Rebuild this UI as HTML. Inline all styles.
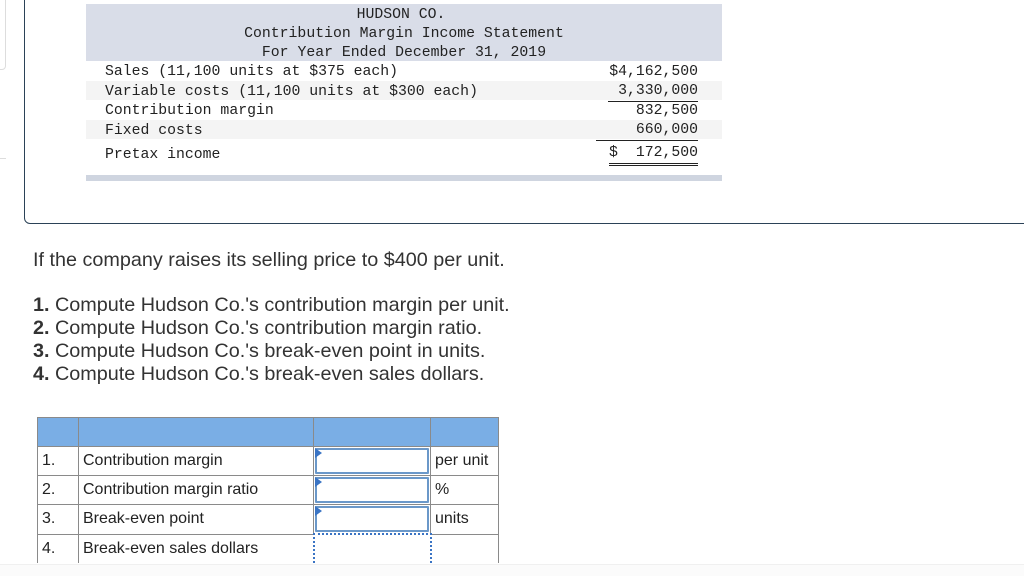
<!DOCTYPE html>
<html><head><style>
body{margin:0;width:1024px;height:575px;overflow:hidden;background:#fff;position:relative;font-family:"Liberation Sans",Arial,sans-serif;}
.abs{position:absolute}
.mono{font-family:"Liberation Mono",monospace;font-size:14.8px;color:#222;}
.card{left:24px;top:-10px;width:1100px;height:232px;border:1px solid #2b4257;border-radius:6px;}
.st{left:86px;width:636px;}
.row{position:absolute;left:86px;width:636px;height:19.5px;line-height:22px;}
.row .l{position:absolute;left:19px}
.row .r{position:absolute;right:24px;text-align:right}
.q{font-size:19.8px;color:#333;left:33px;line-height:23.3px}
table{border-collapse:collapse;position:absolute;left:37px;top:417px;font-size:16px;color:#222}
td{border:1px solid #8a8a8a;height:28px;padding:0 4px;vertical-align:middle}
tr.h td{background:#7aaee5;height:28px}
.inp{position:relative;padding:0}
.inp div{position:absolute;left:1px;top:1px;right:1px;bottom:1px;border:2px solid #6b98c9;border-radius:1px}
.inp span{position:absolute;left:1px;top:1px;width:0;height:0;border-top:5px solid transparent;border-bottom:5px solid transparent;border-left:7px solid #3a74c4}
</style></head><body>
<div class="abs" style="left:-6px;top:-6px;width:10px;height:74px;border:1px solid #ddd;border-radius:4px"></div>
<div class="abs" style="left:0;top:158px;width:6px;height:1px;background:#ddd"></div>
<div class="abs card"></div>
<div class="abs st mono" style="top:4px;height:57px;background:#d9dde8;text-align:center;line-height:19px;padding-top:0">
<div style="width:636px;padding-top:2px"><span style="position:relative;left:-3px">HUDSON CO.</span><br>Contribution Margin Income Statement<br>For Year Ended December 31, 2019</div></div>
<div class="row mono" style="top:61px"><span class="l">Sales (11,100 units at $375 each)</span><span class="r">$4,162,500</span></div>
<div class="row mono" style="top:80.5px;background:#f4f4f4"><span class="l">Variable costs (11,100 units at $300 each)</span><span class="r" style="border-bottom:1px solid #222;line-height:20px;padding-left:10px">3,330,000</span></div>
<div class="row mono" style="top:100px"><span class="l">Contribution margin</span><span class="r">832,500</span></div>
<div class="row mono" style="top:119.5px;background:#f4f4f4"><span class="l">Fixed costs</span><span class="r" style="border-bottom:1px solid #222;line-height:20px;padding-left:40px">660,000</span></div>
<div class="row mono" style="top:144px"><span class="l">Pretax income</span><span class="r" style="border-bottom:3px double #222;line-height:19px;width:89px"><span style="float:left">$</span>172,500</span></div>
<div class="abs" style="left:86px;top:175px;width:636px;height:6px;background:#cfd5e0"></div>
<div class="abs q" style="top:248.5px">If the company raises its selling price to $400 per unit.</div>
<div class="abs q" style="top:293.5px"><b>1.</b> Compute Hudson Co.'s contribution margin per unit.<br><b>2.</b> Compute Hudson Co.'s contribution margin ratio.<br><b>3.</b> Compute Hudson Co.'s break-even point in units.<br><b>4.</b> Compute Hudson Co.'s break-even sales dollars.</div>
<table>
<tr class="h"><td style="width:32px"></td><td style="width:226px"></td><td style="width:108px"></td><td style="width:59px"></td></tr>
<tr><td>1.</td><td>Contribution margin</td><td class="inp"><div></div><span></span></td><td>per unit</td></tr>
<tr><td>2.</td><td>Contribution margin ratio</td><td class="inp"><div></div><span></span></td><td>%</td></tr>
<tr><td>3.</td><td>Break-even point</td><td class="inp"><div></div><span></span></td><td>units</td></tr>
<tr><td style="border-bottom:none">4.</td><td style="border-bottom:none">Break-even sales dollars</td><td style="border:2px dotted #3a74c4;border-bottom:none"></td><td style="border-bottom:none"></td></tr>
</table>
<div class="abs" style="left:0;top:564px;width:1024px;height:11px;background:#fbfbfb;border-top:1px solid #f0f0f0"></div>
</body></html>
